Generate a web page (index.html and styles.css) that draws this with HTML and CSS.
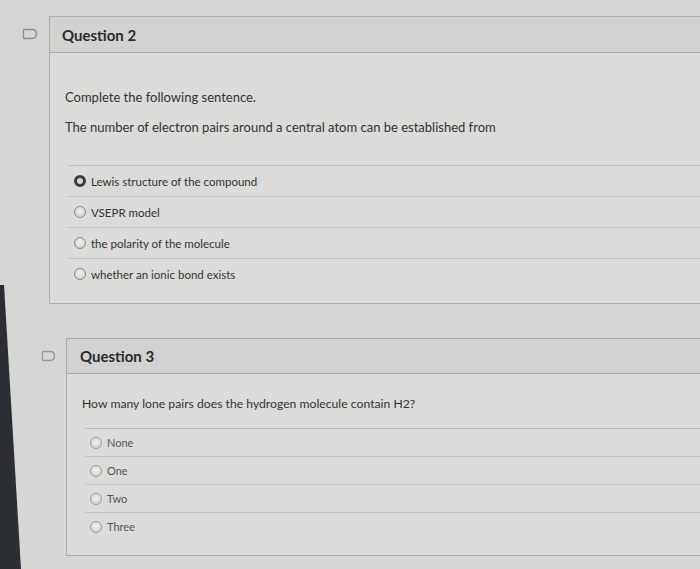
FILE: index.html
```html
<!DOCTYPE html>
<html lang="en">
<head>
<meta charset="utf-8">
<title>Quiz</title>
<link rel="stylesheet" href="styles.css">
</head>
<body>
<div class="bezel"></div>
<main class="page">
  <section class="question q2">
    <div class="flag">
      <svg width="16" height="12" viewBox="0 0 16 12"><path d="M1.5 1.5 H10 Q14.5 1.5 14.5 6 Q14.5 10.5 10 10.5 H1.5 Z" fill="none" stroke="#8e8e8e" stroke-width="1.4" stroke-linejoin="round"/></svg>
    </div>
    <div class="card">
      <div class="card-header">Question 2</div>
      <div class="card-body">
        <p class="text">Complete the following sentence.</p>
        <p class="text second">The number of electron pairs around a central atom can be established from</p>
        <div class="answers">
          <div class="answer"><span class="radio checked"></span><span>Lewis structure of the compound</span></div>
          <div class="answer"><span class="radio"></span><span>VSEPR model</span></div>
          <div class="answer"><span class="radio"></span><span>the polarity of the molecule</span></div>
          <div class="answer"><span class="radio"></span><span>whether an ionic bond exists</span></div>
        </div>
      </div>
    </div>
  </section>

  <section class="question q3">
    <div class="flag">
      <svg width="15" height="12" viewBox="0 0 15 12"><path d="M1.5 1.5 H9.5 Q13.5 1.5 13.5 6 Q13.5 10.5 9.5 10.5 H1.5 Z" fill="none" stroke="#9a9a9a" stroke-width="1.4" stroke-linejoin="round"/></svg>
    </div>
    <div class="card">
      <div class="card-header">Question 3</div>
      <div class="card-body">
        <p class="text">How many lone pairs does the hydrogen molecule contain H2?</p>
        <div class="answers">
          <div class="answer"><span class="radio"></span><span>None</span></div>
          <div class="answer"><span class="radio"></span><span>One</span></div>
          <div class="answer"><span class="radio"></span><span>Two</span></div>
          <div class="answer"><span class="radio"></span><span>Three</span></div>
        </div>
      </div>
    </div>
  </section>
</main>
</body>
</html>
```
FILE: styles.css
```css
html, body {
  margin: 0;
  padding: 0;
}
body {
  width: 700px;
  height: 569px;
  overflow: hidden;
  background: #d6d6d4;
  font-family: Lato, "Liberation Sans", sans-serif;
  color: #2e2e2e;
}
.bezel {
  position: absolute;
  left: 0;
  top: 285px;
  width: 22px;
  height: 284px;
  background: #2b2e33;
  clip-path: polygon(0 0, 4px 0, 21px 100%, 0 100%);
}
.page {
  padding-top: 16px;
  display: flex;
  flex-direction: column;
}
.question {
  display: flex;
  align-items: flex-start;
}
.q2 {
  margin-left: 22px;
}
.q3 {
  margin-left: 41px;
  margin-top: 34px;
}
.flag {
  flex: none;
  display: flex;
  align-items: center;
  height: 36px;
}
.q2 .flag { width: 27px; }
.q3 .flag { width: 25px; height: 35px; }
.card {
  flex: none;
  width: 700px;
  border: 1px solid #adadab;
  border-right: none;
  background: #dbdbd9;
}
.card-header {
  height: 35px;
  display: flex;
  align-items: center;
  padding-left: 12px;
  font-weight: 700;
  font-size: 15px;
  color: #2a2a2a;
  background: #d2d2d0;
  border-bottom: 1px solid #a9a9a7;
}
.q3 .card-header {
  height: 34px;
  padding-left: 13px;
}
.card-body {
  padding: 35px 0 14px 15px;
}
.q3 .card-body {
  padding: 21px 0 15px 15px;
}
.text {
  margin: 0;
  font-size: 13px;
  line-height: 18px;
  color: #333;
}
.q3 .text {
  font-size: 12.2px;
}
.text.second {
  margin-top: 12px;
}
.answers {
  margin-top: 29px;
  margin-left: 3px;
  border-top: 1px solid #bdbdbb;
}
.q3 .answers {
  margin-top: 15px;
}
.answer {
  height: 30px;
  display: flex;
  align-items: center;
  gap: 5px;
  padding-left: 6px;
  font-size: 11.5px;
  color: #333;
  border-bottom: 1px solid #c2c2c0;
}
.answer:last-child {
  border-bottom: none;
}
.q3 .answer {
  height: 27px;
  padding-left: 5px;
  font-size: 11px;
  color: #555;
}
.radio {
  flex: none;
  width: 10px;
  height: 10px;
  border-radius: 50%;
  border: 1px solid #8a8a8a;
  background: radial-gradient(circle at 50% 40%, #f2f2f0, #c8c8c6);
}
.radio.checked {
  width: 6px;
  height: 6px;
  border: 3px solid #3a3a3a;
  background: #d8d8d6;
}
.q3 .radio {
  width: 10px;
  height: 10px;
  border-color: #9a9a9a;
}
```
